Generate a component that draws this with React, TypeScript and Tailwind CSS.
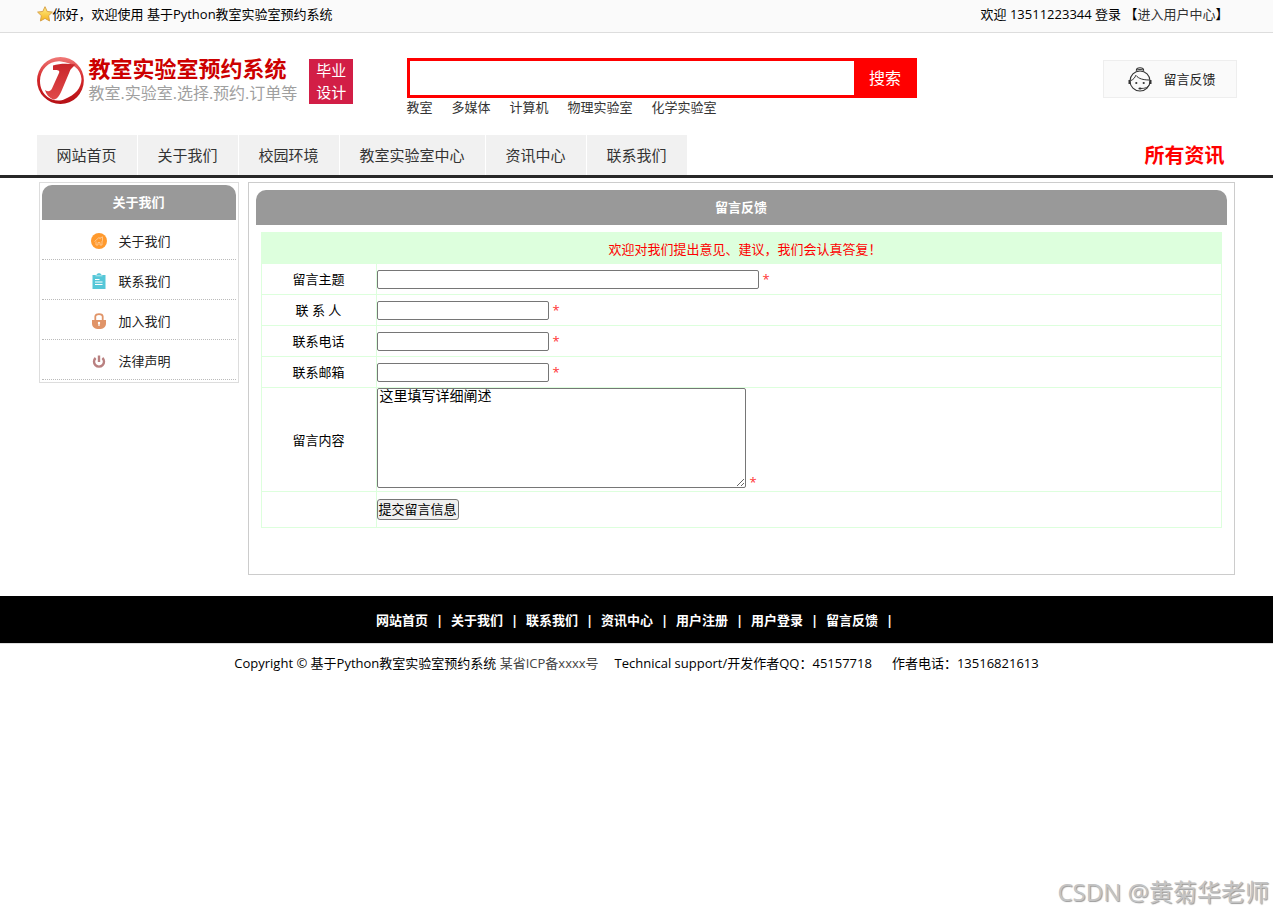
import React from "react";

const hotWords = ["教室", "多媒体", "计算机", "物理实验室", "化学实验室"];
const navItems = ["网站首页", "关于我们", "校园环境", "教室实验室中心", "资讯中心", "联系我们"];
const footerLinks = ["网站首页", "关于我们", "联系我们", "资讯中心", "用户注册", "用户登录", "留言反馈"];

function StarIcon() {
  return (
    <svg viewBox="0 0 16 16" className="size-4 shrink-0" aria-hidden="true">
      <defs>
        <linearGradient id="star" x1="0" y1="0" x2="0" y2="1">
          <stop offset="0" stopColor="#fff08a" />
          <stop offset="1" stopColor="#f5b21c" />
        </linearGradient>
      </defs>
      <path
        d="M8 .7l2.2 4.8 5.2.6-3.8 3.6 1 5.3L8 12.4 3.4 15l1-5.3L.6 6.1l5.2-.6z"
        fill="url(#star)"
        stroke="#d9a34a"
        strokeWidth="1"
        strokeLinejoin="round"
      />
    </svg>
  );
}

function LogoMark() {
  return (
    <svg viewBox="0 0 48 48" className="size-12 shrink-0" aria-hidden="true">
      <defs>
        <linearGradient id="mark" x1="0" y1="0" x2="0" y2="1">
          <stop offset="0" stopColor="#f07a78" />
          <stop offset=".45" stopColor="#d4282b" />
          <stop offset="1" stopColor="#b50f14" />
        </linearGradient>
        <linearGradient id="letter" x1="0" y1="0" x2="0" y2="1">
          <stop offset="0" stopColor="#c9252a" />
          <stop offset="1" stopColor="#e04a4a" />
        </linearGradient>
      </defs>
      <path
        fillRule="evenodd"
        fill="url(#mark)"
        d="M23.500 0A23.400 23.500 0 1 1 23.400 47A23.400 23.500 0 1 1 23.500 0zM24 4.500C13 3 3 12 3 24C3 31 6 36.500 10.500 40C14 43 22 45 28 42C38 38 44.500 31 44.500 22C44 12 35 5.500 24 4.500z"
      />
      <path
        fill="url(#letter)"
        d="M16 8.500C22 6.500 30 6 38.500 7.500L34.500 11.500C33.500 12.500 33 13.500 32.500 15L24.500 34C22 40 19.500 42.500 16 42.500C12 40.500 9 37.500 8 33C11 35 13.500 34.500 15 31.500L22 16C23 13.500 21.500 12.500 16 13z"
      />
    </svg>
  );
}

function ServiceIcon() {
  return (
    <svg viewBox="0 0 24 27" className="h-[27px] w-6 shrink-0" fill="none" stroke="#333" aria-hidden="true">
      <circle cx="12" cy="15" r="10" strokeWidth="1.100" />
      <path d="M8.300 4.500C8.500 .8 15.500 .8 15.700 4.500" strokeWidth="1.100" />
      <path d="M8 4.300C10.500 3.300 13.500 3.300 16 4.300" strokeWidth="1" />
      <path d="M3 14.500C5.500 13.500 7 11.500 7.800 9.300C11 13 15 13.800 21 14" strokeWidth="1" />
      <path d="M1.500 14v4M22.500 14v4" strokeWidth="2" />
      <path d="M21.500 18.500C20 21.500 17 22.500 13 22.500" strokeWidth=".9" />
      <circle cx="8.300" cy="17" r="1.100" fill="#333" stroke="none" />
      <circle cx="15.700" cy="17" r="1.100" fill="#333" stroke="none" />
      <ellipse cx="12" cy="22.500" rx="1.600" ry=".9" fill="#333" stroke="none" />
    </svg>
  );
}

function HomeIcon() {
  return (
    <svg viewBox="0 0 16 16" className="size-4" aria-hidden="true">
      <circle cx="8" cy="8" r="8" fill="#ff9a2e" />
      <path
        d="M3.500 8.500L8 4.500l1.500 1.300M5 8.500V12h2V9.500h2V12h2V8l1-.6M8.500 5.500l3-1.700v3.500"
        fill="none"
        stroke="#ffc58a"
        strokeWidth="1"
      />
    </svg>
  );
}

function ClipboardIcon() {
  return (
    <svg viewBox="0 0 16 16" className="size-4" aria-hidden="true">
      <path d="M1.500 2H5c.5 0 .8-.3 1-.8C6.500-.2 9.500-.2 10 1.200c.2.5.5.8 1 .8h3.500v14h-13z" fill="#56c7d8" />
      <path d="M4.500 2.800h7" stroke="#b5e8ee" strokeWidth="1" />
      <path d="M4 6.500h4.500M4 9h7.500M4 11.500h7.500" stroke="#fff" strokeWidth="1.100" />
    </svg>
  );
}

function LockIcon() {
  return (
    <svg viewBox="0 0 16 16" className="size-4" aria-hidden="true">
      <path d="M4.300 8V3.500C4.300 .2 11.700 .2 11.700 3.500V8" fill="none" stroke="#e09468" strokeWidth="1.800" />
      <path d="M1 7h14v3.500C15 14 12.500 16 8 16S1 14 1 10.500z" fill="#e09468" />
      <circle cx="8" cy="10" r="1.200" fill="#fff" />
      <path d="M8 10v3" stroke="#fff" strokeWidth="1.200" />
    </svg>
  );
}

function PowerIcon() {
  return (
    <svg viewBox="0 0 16 16" className="size-4" fill="none" stroke="#b98080" strokeWidth="2.400" aria-hidden="true">
      <path d="M4.600 5A5 5 0 1 0 11.400 5" />
      <path d="M8 2.500v6.500" />
    </svg>
  );
}

const sideItems = [
  { text: "关于我们", icon: <HomeIcon /> },
  { text: "联系我们", icon: <ClipboardIcon /> },
  { text: "加入我们", icon: <LockIcon /> },
  { text: "法律声明", icon: <PowerIcon /> },
];

const fields = [
  { id: "subject", label: "留言主题", width: "w-[382px]", type: "text" },
  { id: "contact", label: "联 系 人", width: "w-[172px]", type: "text" },
  { id: "phone", label: "联系电话", width: "w-[172px]", type: "tel" },
  { id: "email", label: "联系邮箱", width: "w-[172px]", type: "email" },
];

export default function App() {
  return (
    <div className="relative min-h-screen bg-white font-['Open_Sans','Noto_Sans_CJK_SC',sans-serif] text-[13px] leading-5 text-black">
      <div className="border-b border-[#dddddd] bg-[#fafafa]">
        <div className="mx-auto flex h-8 max-w-[1200px] items-center justify-between pr-2 pb-1">
          <p className="flex items-center">
            <StarIcon />
            你好，欢迎使用 基于Python教室实验室预约系统
          </p>
          <p>
            欢迎 13511223344 登录 【
            <a href="#user" className="text-[#333333]">进入用户中心</a>】
          </p>
        </div>
      </div>

      <header className="border-b-3 border-[#282828]">
        <div className="mx-auto max-w-[1200px]">
          <div className="flex h-[102px] items-start pt-6">
            <a href="#home" className="flex w-[370px] shrink-0 items-start">
              <LogoMark />
              <span className="ml-1 flex flex-col whitespace-nowrap">
                <span className="text-[22px] leading-[23px] font-bold text-[#cc0000]">教室实验室预约系统</span>
                <span className="text-base leading-[26px] text-[#a0a0a0]">教室.实验室.选择.预约.订单等</span>
              </span>
              <span className="mt-[2px] ml-3 flex h-[45px] w-11 flex-col items-center bg-[#d21e46] text-[15px] leading-[22px] text-white">
                <span>毕业</span>
                <span>设计</span>
              </span>
            </a>
            <div>
              <form className="mt-[1px] flex h-10 w-[510px]" onSubmit={(e) => e.preventDefault()}>
                <input
                  type="search"
                  aria-label="搜索"
                  className="min-w-0 flex-1 border-3 border-r-0 border-[#ff0000] px-2 text-sm outline-none"
                />
                <button type="submit" className="w-[63px] bg-[#ff0000] text-base text-white">
                  搜索
                </button>
              </form>
              <ul className="flex gap-[19px] leading-[18px] text-[#333333]">
                {hotWords.map((word) => (
                  <li key={word}>
                    <a href="#search">{word}</a>
                  </li>
                ))}
              </ul>
            </div>
            <a
              href="#feedback"
              className="mt-[3px] ml-auto flex h-[38px] w-[134px] items-center gap-3 border border-[#eeeeee] bg-[#fafafa] pl-6 text-[#222222]"
            >
              <ServiceIcon />
              留言反馈
            </a>
          </div>
          <div className="flex items-center justify-between pr-3">
            <nav className="flex gap-px">
              {navItems.map((item) => (
                <a
                  key={item}
                  href="#nav"
                  className="bg-[#f1f1f1] px-5 text-[15px] leading-10 text-[#333333]"
                >
                  {item}
                </a>
              ))}
            </nav>
            <a href="#news" className="pt-[2px] text-xl leading-[38px] font-bold text-[#ff0000]">
              所有资讯
            </a>
          </div>
        </div>
      </header>

      <main className="mx-auto mt-1 flex max-w-[1200px] items-start gap-[9px] px-[2px]">
        <aside className="w-[200px] shrink-0 border border-[#dddddd] p-[2px]">
          <h2 className="rounded-t-[10px] bg-[#999999] text-center leading-[35px] font-bold text-white">
            关于我们
          </h2>
          <ul>
            {sideItems.map((item) => (
              <li key={item.text} className="border-b border-dotted border-[#bbbbbb]">
                <a href="#side" className="flex h-[39px] items-center gap-3 pt-[2px] pl-[49px] text-[#222222]">
                  {item.icon}
                  {item.text}
                </a>
              </li>
            ))}
          </ul>
        </aside>

        <section className="min-w-0 flex-1 border border-[#cccccc] px-[7px] pt-[7px] pb-[46px]">
          <h1 className="rounded-t-[10px] bg-[#999999] text-center leading-[35px] font-bold text-white">
            留言反馈
          </h1>
          <form className="mx-[5px] mt-[7px]" onSubmit={(e) => e.preventDefault()}>
            <table className="w-full border-collapse">
              <tbody>
                <tr>
                  <td
                    colSpan={2}
                    className="h-[31px] border border-[#ddffdd] bg-[#ddffdd] p-0 pt-[2px] pl-2 text-center text-[#ff0000]"
                  >
                    欢迎对我们提出意见、建议，我们会认真答复！
                  </td>
                </tr>
                {fields.map((field) => (
                  <tr key={field.id}>
                    <th className="h-[31px] w-[115px] border border-[#ddffdd] p-0 font-normal">
                      <label htmlFor={field.id}>{field.label}</label>
                    </th>
                    <td className="border border-[#ddffdd] p-0">
                      <div className="flex items-center gap-1">
                        <input
                          id={field.id}
                          type={field.type}
                          className={`h-[19px] rounded-[2px] border border-[#767676] px-[2px] ${field.width}`}
                        />
                        <span className="text-[#ff3333]">*</span>
                      </div>
                    </td>
                  </tr>
                ))}
                <tr>
                  <th className="h-[104px] border border-[#ddffdd] p-0 font-normal">
                    <label htmlFor="content">留言内容</label>
                  </th>
                  <td className="border border-[#ddffdd] p-0 pb-[3px]">
                    <div className="flex items-end gap-1">
                      <textarea
                        id="content"
                        defaultValue="这里填写详细阐述"
                        className="h-[100px] w-[369px] rounded-[2px] border border-[#767676] px-[2px] text-sm leading-[14px]"
                      />
                      <span className="leading-3 text-[#ff3333]">*</span>
                    </div>
                  </td>
                </tr>
                <tr>
                  <td className="h-[36px] border border-[#ddffdd] p-0" />
                  <td className="border border-[#ddffdd] p-0">
                    <button
                      type="submit"
                      className="block h-[21px] rounded-[3px] border border-[#767676] bg-[#efefef] px-[1px] leading-[19px]"
                    >
                      提交留言信息
                    </button>
                  </td>
                </tr>
              </tbody>
            </table>
          </form>
        </section>
      </main>

      <footer className="mt-[21px]">
        <nav className="flex h-12 items-center justify-center border-b border-[#dddddd] bg-black pl-1 font-bold text-white">
          {footerLinks.map((link) => (
            <span key={link} className="flex w-[75px] gap-2">
              <a href="#footer">{link}</a>
              <span>|</span>
            </span>
          ))}
        </nav>
        <p className="mt-[9px] flex flex-wrap justify-center">
          <span className="mr-4">
            Copyright © 基于Python教室实验室预约系统{" "}
            <a href="#icp" className="text-[#444444]">某省ICP备xxxx号</a>
          </span>
          <span className="mr-5">Technical support/开发作者QQ：45157718</span>
          <span>作者电话：13516821613</span>
        </p>
      </footer>

      <p className="absolute right-1 bottom-[6px] text-2xl leading-8 text-[#c4c4c4] [text-shadow:1px_1px_1px_#999999]">
        CSDN @黄菊华老师
      </p>
    </div>
  );
}
